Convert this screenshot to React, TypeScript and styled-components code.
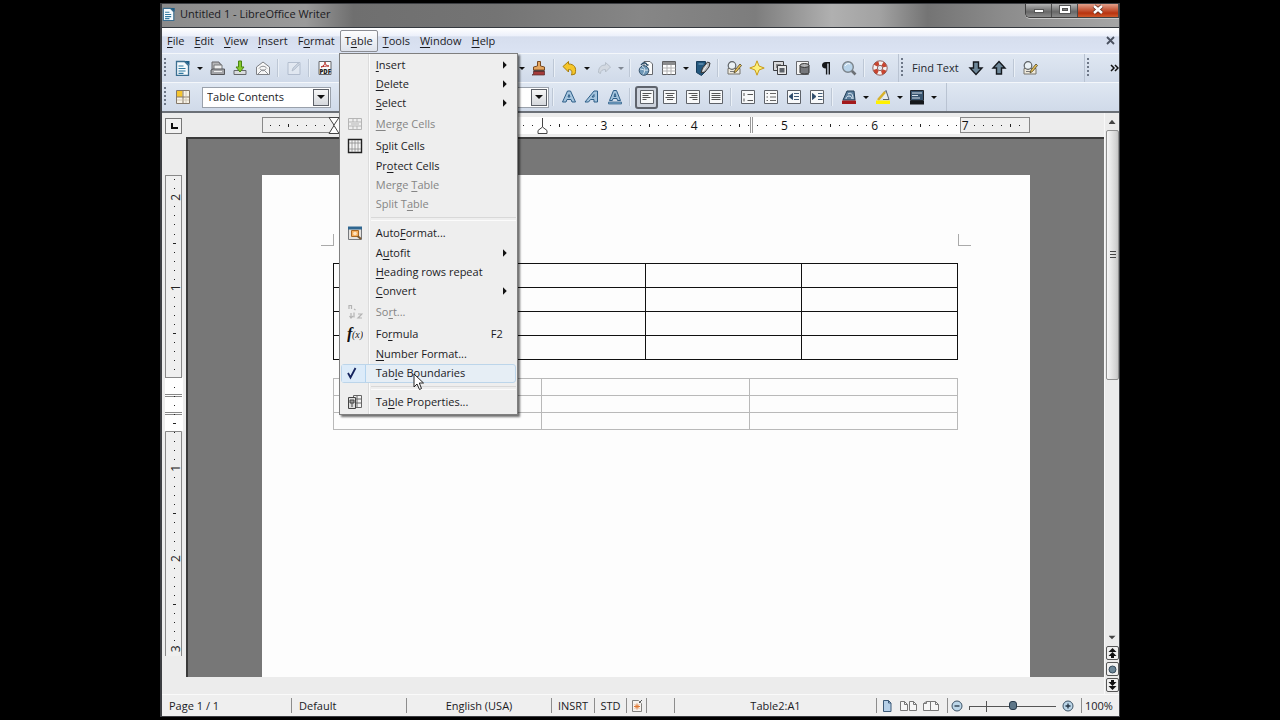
import React from "react";
import styled, { createGlobalStyle, css } from "styled-components";

const GlobalStyle = createGlobalStyle`
  * { box-sizing: border-box; }
  body {
    margin: 0;
    background: #000;
    color: #1b1b1f;
    font: 11px/16px "Open Sans", "Noto Sans", sans-serif;
  }
  button, input, select { font: inherit; color: inherit; margin: 0; }
  button { padding: 0; border: 0; background: none; }
  u { text-underline-offset: 2px; }
`;

/* ---------- window frame ---------- */

const Screen = styled.div`
  display: flex;
  height: 100vh;
  padding: 3px 160px;
  background: #000;
`;

const AppWindow = styled.div`
  flex: 1;
  min-width: 0;
  display: flex;
  flex-direction: column;
  border: solid #3c3e42;
  border-width: 1px 1px 1px 2px;
  background: #ececec;
`;

const TitleBar = styled.header`
  display: flex;
  align-items: flex-start;
  height: 24px;
  border-bottom: 1px solid #34383e;
  background: linear-gradient(90deg, #8b8b8b 0, #9a9a9a 15%, #6f6f6f 20%, #747474 35%, #868686 50%, #7d7d7d 62%, #b0b0b0 70%, #a2a2a2 75%, #747474 80%, #8c8c8c 88%, #a5a5a5 100%);
`;

const Title = styled.h1`
  flex: 1;
  display: flex;
  align-items: center;
  gap: 4px;
  margin: 0;
  font-size: 11px;
  line-height: 20px;
  font-weight: 400;
`;

const WindowButtons = styled.div`
  display: flex;
  height: 14px;
  border: solid #3f3f3f;
  border-width: 0 0 1px 1px;
  border-radius: 0 0 0 5px;
  box-shadow: 0 1px 0 #c8c8c8;
  overflow: hidden;
`;

const WindowButton = styled.button<{ $close?: boolean }>`
  width: ${(p) => (p.$close ? 41 : 26)}px;
  display: flex;
  justify-content: center;
  border-right: 1px solid #4a4a4a;
  background: ${(p) => (p.$close ? "linear-gradient(#e3a08a, #b8330f 70%, #cf5a2c)" : "linear-gradient(#b4b4b4, #686868 60%, #8b8b8b)")};
`;

/* ---------- menu bar and table menu ---------- */

const MenuBar = styled.nav`
  display: flex;
  align-items: center;
  height: 25px;
  padding-right: 4px;
  background: linear-gradient(#ffffff 0, #edf1fb 30%, #d6deee 36%, #dbe3f3 100%);
`;

const MenuSlot = styled.div`
  position: relative;
`;

const MenuTitle = styled.button<{ $open?: boolean }>`
  display: block;
  height: 22px;
  padding: 0 4px;
  line-height: 20px;
  border: 1px solid ${(p) => (p.$open ? "#8b8d93" : "transparent")};
  border-radius: 2px;
  background: ${(p) => (p.$open ? "linear-gradient(#fdfdfe, #dfe3ec)" : "none")};
`;

const CloseDocument = styled.button`
  display: flex;
  margin-left: auto;
`;

const Dropdown = styled.ul`
  position: absolute;
  z-index: 2;
  top: 23px;
  left: -1px;
  width: 179px;
  margin: 0;
  padding: 2px 1px 1px;
  list-style: none;
  border: 1px solid #7f7f7f;
  background: linear-gradient(90deg, transparent 28px, #dcdcdc 28px, #dcdcdc 29px, #fbfbfb 29px, #fbfbfb 30px, transparent 30px), #eeeeee;
  box-shadow: 2px 2px 2px #00000090;
`;

const MenuItem = styled.button<{ $tall?: boolean; $hover?: boolean }>`
  display: flex;
  align-items: center;
  width: 100%;
  height: ${(p) => (p.$tall ? 22 : 19)}px;
  border: 1px solid ${(p) => (p.$hover ? "#bcd5ea" : "transparent")};
  border-radius: 3px;
  background: ${(p) => (p.$hover ? "#e6eef5" : "none")};
  text-align: left;
  &:disabled { color: #858585; }
`;

const MenuIcon = styled.span<{ $checked?: boolean }>`
  display: flex;
  justify-content: center;
  align-self: stretch;
  align-items: center;
  width: 24px;
  margin-right: 10px;
  padding-left: ${(p) => (p.$checked ? 0 : 4)}px;
  border-right: 1px solid ${(p) => (p.$checked ? "#b3d3ee" : "transparent")};
  background: ${(p) => (p.$checked ? "#dcebf9" : "none")};
`;

const MenuText = styled.span`
  flex: 1;
  white-space: nowrap;
`;

const Shortcut = styled.span`
  padding-right: 12px;
`;

const SubmenuArrow = styled.span`
  width: 4px;
  height: 8px;
  margin-right: 8px;
  background: #111;
  clip-path: polygon(0 0, 100% 50%, 0 100%);
`;

const MenuRule = styled.li`
  height: 8px;
  margin-left: 30px;
  padding-top: 3px;
  &::before {
    content: "";
    display: block;
    height: 2px;
    border-top: 1px solid #d8d8d8;
    border-bottom: 1px solid #fbfbfb;
  }
`;

const Pointer = styled.svg`
  position: absolute;
  z-index: 3;
  top: 343px;
  left: 73px;
`;

/* ---------- toolbars ---------- */

const Toolbar = styled.div`
  display: flex;
  align-items: stretch;
  height: 29px;
  border-top: 1px solid #f4f7fb;
  background: linear-gradient(#dfe7f2, #d0dae9);
`;

const Group = styled.div<{ $grow?: boolean; $last?: boolean }>`
  display: flex;
  align-items: center;
  padding-right: ${(p) => (p.$last ? 0 : 7)}px;
  border-right: ${(p) => (p.$last ? 0 : 1)}px solid #b9c3d2;
  ${(p) => p.$grow && css`flex: 1;`}
`;

const Grip = styled.span`
  width: 2px;
  height: 20px;
  margin: 0 5px 0 2px;
  background: repeating-linear-gradient(#6d7787 0 2px, transparent 2px 4px);
`;

const Tool = styled.button<{ $active?: boolean }>`
  flex: none;
  display: flex;
  align-items: center;
  justify-content: center;
  width: 23px;
  height: 23px;
  ${(p) => p.$active && css`
    border: 2px solid #5f646d;
    border-radius: 3px;
    background: #cdd3dd;
  `}
`;

const Caret = styled.button<{ $dim?: boolean }>`
  flex: none;
  display: flex;
  align-items: center;
  justify-content: center;
  width: 11px;
  height: 20px;
  &::before {
    content: "";
    border: solid transparent;
    border-width: 3px 3px 0;
    border-top-color: ${(p) => (p.$dim ? "#808893" : "#111")};
  }
`;

const Divider = styled.span<{ $wide?: boolean }>`
  flex: none;
  width: ${(p) => (p.$wide ? 9 : 8)}px;
  height: 18px;
  background: linear-gradient(90deg, transparent 3px, #bdc7d5 3px 4px, #eaf0f7 4px 5px, transparent 5px);
`;

const Combo = styled.span<{ $width: number }>`
  flex: none;
  display: flex;
  width: ${(p) => p.$width}px;
  height: 21px;
  margin: 0 0 0 8px;
  padding: 1px;
  border: 1px solid #9aa1ab;
  background: #fff;
`;

const ComboSelect = styled.select`
  flex: 1;
  min-width: 0;
  padding: 0 3px;
  border: 0;
  background: #fff;
  appearance: none;
`;

const ComboArrow = styled.span`
  display: flex;
  align-items: center;
  justify-content: center;
  width: 16px;
  border: 1px solid #5c6068;
  background: linear-gradient(#f7f7f7, #d5d8dd);
  pointer-events: none;
  &::before {
    content: "";
    border: solid transparent;
    border-width: 4px 4px 0;
    border-top-color: #111;
  }
`;

const FindInput = styled.input`
  width: 56px;
  padding: 0 0 0 4px;
  border: 0;
  outline: 0;
  background: none;
  &::placeholder { color: #25282e; opacity: 1; }
`;

const Overflow = styled.button`
  display: flex;
`;

/* ---------- document area ---------- */

const Body = styled.div`
  flex: 1;
  min-height: 0;
  display: flex;
  border-top: 2px solid #6b7077;
`;

const Editor = styled.main`
  flex: 1;
  min-width: 0;
  display: flex;
  flex-direction: column;
  padding-bottom: 17px;
`;

const RulerRow = styled.div`
  display: flex;
  align-items: center;
  height: 24px;
  padding-top: 2px;
`;

const TabCorner = styled.button`
  display: flex;
  width: 17px;
  height: 16px;
  margin: 0 5px 0 3px;
  align-items: center;
  justify-content: center;
  border: 1px solid #777;
  background: #f2f2f2;
`;

const RulerTrack = styled.div`
  flex: 1;
  display: flex;
  justify-content: center;
`;

const Canvas = styled.div`
  flex: 1;
  min-height: 0;
  display: flex;
`;

const SideRuler = styled.div`
  width: 24px;
  padding: 38px 0 0 3px;
`;

const Workspace = styled.div`
  flex: 1;
  min-width: 0;
  display: flex;
  justify-content: center;
  overflow: hidden;
  padding-top: 36px;
  border: solid #3a3a3a;
  border-width: 2px 0 0 2px;
  background: #777777;
`;

const Paper = styled.article`
  width: 768px;
  padding: 59px 59px 0;
  background: #fdfdfd;
`;

const Corners = styled.div`
  display: flex;
  justify-content: space-between;
  height: 12px;
  margin-bottom: 17px;
`;

const Corner = styled.span<{ $right?: boolean }>`
  width: 13px;
  border: solid #aaaaaa;
  border-width: ${(p) => (p.$right ? "0 0 1px 1px" : "0 1px 1px 0")};
`;

const Grid = styled.table<{ $faint?: boolean }>`
  width: 625px;
  margin: 0 12px 18px;
  border-collapse: collapse;
  table-layout: fixed;
  td {
    height: ${(p) => (p.$faint ? 17 : 24)}px;
    padding: 0;
    border: 1px solid ${(p) => (p.$faint ? "#b9b9b9" : "#111")};
  }
`;

const ScrollColumn = styled.div`
  display: flex;
  flex-direction: column;
  align-items: center;
  width: 15px;
  border-left: 1px solid #f8f8f8;
  background: #ebebeb;
`;

const ScrollTrack = styled.div`
  flex: 1;
  align-self: stretch;
`;

const Thumb = styled.div`
  display: flex;
  align-items: center;
  justify-content: center;
  height: 50%;
  margin-left: 1px;
  border: 1px solid #8f8f8f;
  border-radius: 2px;
  background: linear-gradient(90deg, #f7f7f7, #d3d3d3 80%, #c4c4c4);
`;

const ThumbGrip = styled.span`
  width: 6px;
  height: 8px;
  background: repeating-linear-gradient(#444 0 1px, transparent 1px 3px);
`;

const ScrollArrow = styled.button<{ $up?: boolean }>`
  width: 7px;
  height: 17px;
  background: #444;
  clip-path: ${(p) => (p.$up ? "polygon(50% 40%, 100% 64%, 0 64%)" : "polygon(0 40%, 100% 40%, 50% 60%)")};
`;

const PageButton = styled.button`
  display: flex;
  align-items: center;
  justify-content: center;
  width: 13px;
  height: 14px;
  margin-bottom: 2px;
  border: 1px solid #555;
  border-radius: 2px;
  background: #f0f0f0;
`;

/* ---------- status bar ---------- */

const StatusBar = styled.footer`
  display: flex;
  align-items: center;
  height: 22px;
  border-top: 1px solid #fafafa;
  background: #efefef;
`;

const StatusCell = styled.div<{ $width?: number; $center?: boolean; $last?: boolean; $pad?: number }>`
  ${(p) => (p.$width ? `width: ${p.$width}px;` : "flex: 1;")}
  height: 15px;
  display: flex;
  align-items: center;
  justify-content: ${(p) => (p.$center ? "center" : "flex-start")};
  gap: 4px;
  padding-left: ${(p) => p.$pad ?? 0}px;
  border-right: ${(p) => (p.$last ? 0 : 1)}px solid #8d8d8d;
  white-space: nowrap;
`;

const ZoomSlider = styled.input`
  width: 87px;
  height: 14px;
  appearance: none;
  background:
    linear-gradient(#555, #555) 0 7px / 100% 1px no-repeat,
    linear-gradient(#555, #555) 0 7px / 1px 4px no-repeat,
    linear-gradient(#555, #555) 17px 2px / 1px 11px no-repeat;
  &::-webkit-slider-thumb {
    appearance: none;
    width: 8px;
    height: 9px;
    border: 1px solid #26394a;
    border-radius: 3px;
    background: #5d7688;
  }
`;

/* ---------- icons ---------- */

const art: Record<string, React.ReactNode> = {
  doc: (
    <>
      <path d="M1.5 1.5h8l4 4v10h-12z" fill="#f5fafd" stroke="#3c6f91" strokeWidth="1.3" />
      <path d="M9.5 1l5 4.5V1z" fill="#1f5f87" />
      <path d="M3.5 6h5M3.5 8.5h7M3.5 11h7M3.5 13.3h5" stroke="#2f789f" strokeWidth="1.2" />
    </>
  ),
  open: (
    <>
      <path d="M3 11V2h7l1 2h1v5" fill="#b6b6b8" stroke="#66676b" />
      <path d="M5 9V5h8v4" fill="#eee" stroke="#77787b" />
      <path d="M2 14.5V10l2-1h11.500v5.500z" fill="#a3a4a8" stroke="#55565a" />
      <path d="M5 11.500h8" stroke="#eee" />
    </>
  ),
  save: (
    <>
      <path d="M2 10.5h12v4H2z" fill="#d9dbde" stroke="#66686c" />
      <path d="M6.500 1h3v6H12l-4 5-4-5h2.500z" fill="#86c92d" stroke="#4a8413" />
    </>
  ),
  mail: (
    <>
      <path d="M1.500 7l6.500-5 6.500 5v7.500h-13z" fill="#f7f7f7" stroke="#7e8085" />
      <path d="M4 8.500c2-3 6-3 8 0M3 14l4-4h2l4 4M5 9l3 2 3-2" fill="none" stroke="#8d8f94" />
    </>
  ),
  edit: (
    <g opacity=".45">
      <path d="M2 2.500h12v12H2z" fill="#eef1f6" stroke="#8795aa" />
      <path d="M6 11l1-3 5-5 1.500 1.500-5 5z" fill="#b5bfcd" stroke="#7b8798" strokeWidth=".7" />
    </g>
  ),
  pdf: (
    <>
      <path d="M2 1.500h12v13H2z" fill="#fafafa" stroke="#65666b" />
      <path d="M4 7c3-1 4-3 4-5 0 3 2 4 4 4-3 0-6 .5-8 1z" fill="none" stroke="#b8332c" />
      <text x="2.500" y="14" fontSize="6" fontWeight="800" fill="#222">PDF</text>
    </>
  ),
  brush: (
    <>
      <path d="M6.500 1.500h3V6l4 1v3h-11V7l4-1z" fill="#e5a660" stroke="#7a4b23" />
      <path d="M2.500 10h11v2h-11z" fill="#54453f" />
      <path d="M2.500 11.500h11v3.500H1l1.500-1z" fill="#a53b3a" stroke="#572829" strokeWidth=".7" />
    </>
  ),
  undo: <path d="M1 6.500l5.500-5V4c5.500 0 8.500 3.500 6.500 10l-3.500 1c1-4 0-5.500-3-5.500v2.500z" fill="#f5c62b" stroke="#a77d0c" />,
  redo: <path d="M14.500 7l-5-4.500V5c-4 0-7 2-7 7.500l2 1c0-3 2-4 5-4V12z" fill="#d3d9e1" stroke="#b6bfca" />,
  link: (
    <>
      <path d="M6 1.500h6l2.500 2.500v10.500H6z" fill="#fafafa" stroke="#66686d" />
      <circle cx="6" cy="10.500" r="4.800" fill="#6f98b7" stroke="#34516a" />
      <path d="M2 9c3 0 4 2 8 1M4 6.500c4 1 3 5 1 8" fill="none" stroke="#d5e4ee" />
      <path d="M3 5c2-3 5-3 6 0l1.500 0" fill="none" stroke="#24455f" strokeWidth="1.300" />
    </>
  ),
  table: (
    <>
      <path d="M1.500 1.500h13v13h-13z" fill="#fff" stroke="#5f6063" />
      <path d="M2 2h12v3H2z" fill="#8a8b8d" />
      <path d="M1.500 8h13M1.500 11h13M6 5v9.500M10 5v9.500" stroke="#b3b3b4" />
    </>
  ),
  draw: (
    <>
      <path d="M1.500 1.500h9v10l-4 4-5-3z" fill="#24587f" stroke="#173d5b" />
      <path d="M6 13l1.500-5 5-6 2.500 1-1 4-4 5z" fill="#b9bcc0" stroke="#333" />
      <path d="M3.500 4h5" stroke="#84aecb" />
      <path d="M8 11l4-6" stroke="#f4f4f4" />
    </>
  ),
  find: (
    <>
      <path d="M2 8.500h12V14H2z" fill="#eee9dc" stroke="#77746c" />
      <circle cx="6" cy="5.500" r="3.800" fill="#eaf1f5" stroke="#5e6266" strokeWidth="1.200" />
      <path d="M8 13l1-3 5-6 1.500 1.500-5 6z" fill="#e8c156" stroke="#4e4528" strokeWidth=".8" />
      <path d="M4 11.500h4" stroke="#777" />
    </>
  ),
  star: <path d="M8 .8l2 5.200 5.200 2L10 10l-2 5.200L6 10 .8 8 6 6z" fill="#fdf07a" stroke="#c99b19" strokeLinejoin="round" />,
  gallery: (
    <>
      <path d="M1.500 1.500h10v9h-10z" fill="#d9dadc" stroke="#3d3e42" />
      <path d="M4 4h5v4H4z" fill="#888" />
      <path d="M5.500 5.500h9v9h-9z" fill="#e8e9ea" stroke="#3d3e42" />
      <path d="M7.500 8h5v4.500h-5z" fill="#5c6167" />
    </>
  ),
  sources: (
    <>
      <path d="M1.500 1.500h12v13h-12z" fill="#f5f5f5" stroke="#67696d" />
      <path d="M5 5.500v7c1 2 8 2 9 0v-7z" fill="#75777b" stroke="#333" />
      <ellipse cx="9.500" cy="5.500" rx="4.500" ry="2" fill="#b1b3b6" stroke="#333" />
    </>
  ),
  para: <path d="M12 2v12.500h-1.400V3.500H9.300v11H7.900V8.500C5 8.500 4 7 4 5.200S5.300 2 7.900 2z" fill="#15171a" />,
  zoom: (
    <>
      <path d="M10.500 10.500l4 4" stroke="#6c7075" strokeWidth="2.600" />
      <circle cx="7" cy="7" r="5.300" fill="#b9d4ea" stroke="#7b838a" strokeWidth="1.400" />
      <path d="M4 6c1-2 3-3 5-2" stroke="#fff" fill="none" />
    </>
  ),
  help: (
    <>
      <circle cx="8" cy="8" r="5" fill="none" stroke="#f3f3f3" strokeWidth="4" />
      <circle cx="8" cy="8" r="5" fill="none" stroke="#c8442f" strokeWidth="4" strokeDasharray="4 3.850" strokeDashoffset="-2" />
      <circle cx="8" cy="8" r="7.200" fill="none" stroke="#854036" strokeWidth=".8" />
      <circle cx="8" cy="8" r="2.700" fill="#dfe6ef" stroke="#854036" strokeWidth=".8" />
    </>
  ),
  down: <path d="M5.500 2h5v6H14l-6 6.500L2 8h3.500z" fill="#6d8799" stroke="#15191e" strokeWidth="1.400" />,
  up: <path d="M5.500 14h5V8H14L8 1.500 2 8h3.500z" fill="#6d8799" stroke="#15191e" strokeWidth="1.400" />,
  styles: (
    <>
      <path d="M1.500 1.500h13v13h-13z" fill="#f7f2e6" stroke="#85796a" />
      <path d="M2 2h5.500v6H2z" fill="#f6c52e" />
      <path d="M8 1.500v13M1.500 8h13" stroke="#85796a" />
      <path d="M11 2v12M2 11h12" stroke="#c9c0b0" strokeWidth=".8" />
    </>
  ),
  bold: <path d="M1.500 13L6.500 2h3l5 11H11l-1-2.500H6L5 13zM7 8h2L8 5.500z" fill="#a6c5de" stroke="#2e5f88" />,
  italic: <path d="M1 13l9-11h3.500v11H10v-2.500H6.500l-2 2.500zM8 8h2V5.500z" fill="#a6c5de" stroke="#2e5f88" />,
  underline: (
    <>
      <path d="M2.500 11.500L6.500 1.500h3l4 10h-3L10 9.500H6l-.7 2zM7 7.500h2L8 4.500z" fill="#a6c5de" stroke="#2e5f88" />
      <path d="M1.500 13h13v2h-13z" fill="#7ca6c8" stroke="#2e5f88" strokeWidth=".7" />
    </>
  ),
  fontColor: (
    <>
      <path d="M2 11L6 2h7l1 9z" fill="#5c7f9e" stroke="#223e57" />
      <path d="M5 10c0-4 6-4 6 0M7 5c3-2 5 0 5 5" fill="none" stroke="#dce8f2" />
      <path d="M1 11.500h14V15H1z" fill="#a3191b" />
    </>
  ),
  highlight: (
    <>
      <path d="M9 3.500l2-2 3 9H8" fill="#e8edf1" stroke="#54606b" />
      <path d="M3 11l7-8" stroke="#d8b22a" strokeWidth="2.500" />
      <path d="M1 11.500h14V15H1z" fill="#fff101" />
    </>
  ),
  background: (
    <>
      <path d="M1.500 1.500h13v10h-13z" fill="#36536e" stroke="#20252c" />
      <path d="M3 4h10M3 6.500h6M3 9h8" stroke="#d4dfe9" strokeWidth="1.200" />
      <path d="M1 12h14v3.500H1z" fill="#15171b" />
    </>
  ),
  numbered: boxed(<path d="M4 4v3M7.500 5.500H13M4 9.500v3M7.500 11.500H13" stroke="#555" />),
  bullets: boxed(<path d="M3.500 4.500h1.500M7 4.500h6M3.500 8h1.500M7 8h6M3.500 11.500h1.500M7 11.500h6" stroke="#666" />),
  outdent: boxed(<path d="M6.500 4.500v6L3 7.500zM8 4.500h5M8 7.500h5M8 10.500h5" fill="#2b4a6a" stroke="#2b4a6a" strokeWidth=".9" />),
  indent: boxed(<path d="M3.500 4.500v6L7 7.500zM9 4.500h4.500M9 7.500h4.500M9 10.500h4.500" fill="#2b4a6a" stroke="#2b4a6a" strokeWidth=".9" />),
  left: boxed(<path d="M3.500 4.500h9M3.500 6.500h6M3.500 8.500h8M3.500 10.500h4" stroke="#555" />),
  center: boxed(<path d="M3.500 4.500h9M5 6.500h6M3.500 8.500h9M5 10.500h6" stroke="#555" />),
  right: boxed(<path d="M3.500 4.500h9M6.500 6.500h6M4.500 8.500h8M7.500 10.500h5" stroke="#555" />),
  justify: boxed(<path d="M3.500 4.500h9M3.500 6.500h9M3.500 8.500h9M3.500 10.500h9" stroke="#555" />),
  blank: null,
  mergeCells: (
    <path d="M1.500 2.500h13v11h-13zM1.500 6h13M1.500 10h13M6 2.500V6M10 2.500V6M6 10v3.500M10 10v3.500M4 8h8" fill="none" stroke="#b5b5b5" />
  ),
  splitCells: (
    <>
      <path d="M1.500 1.500h13v13h-13z" fill="#f4f4f4" stroke="#222" strokeWidth="1.400" />
      <path d="M5 2v12M8 2v12M11 2v12M2 5h12M2 11h12" stroke="#8b8b8b" strokeWidth=".8" />
    </>
  ),
  autoFormat: (
    <>
      <path d="M1.500 2.500h13v12h-13z" fill="#e4e2e0" stroke="#77797c" />
      <path d="M1 1.500h14v3H1z" fill="#2f6690" />
      <path d="M4.500 5.500h7v6h-7z" fill="#f6ad5c" stroke="#a86824" />
      <circle cx="8" cy="8.500" r="1.800" fill="#fde3c0" />
      <path d="M10.500 11l3.500 3" stroke="#7d5a30" strokeWidth="2" />
    </>
  ),
  sort: (
    <path d="M2 5V1.500h2.500V5M7 5l1.500 1M4 9v4M2.500 12L4 14l2-2M7 8.500v5M11 10h4l-4 4h4" fill="none" stroke="#b4b4b4" strokeWidth="1.200" />
  ),
  formula: (
    <>
      <text x="0" y="13" fontFamily="Liberation Serif, serif" fontSize="16" fontWeight="700" fontStyle="italic" fill="#111">f</text>
      <text x="5" y="12" fontFamily="Liberation Serif, serif" fontSize="10" fontStyle="italic" fill="#222">(x)</text>
    </>
  ),
  check: <path d="M3 8l2.500 4.500L10.500 3" fill="none" stroke="#15245e" strokeWidth="1.800" />,
  tableProps: (
    <>
      <path d="M6.500 1.500h8v12h-8zM10 2v11M6.500 5h8M6.500 9h8" fill="#f3f3f3" stroke="#666" />
      <path d="M1.500 3.500h7v11h-7z" fill="#ddd" stroke="#444" />
      <path d="M3 6h4v3H3zM5 9v4" fill="#999" stroke="#444" />
    </>
  ),
  page: (
    <>
      <path d="M4.500 2.500h5l2.500 2.500v8.500H4.500z" fill="#b6d0e8" stroke="#3c5a78" />
      <path d="M9.500 2.500V5H12" fill="none" stroke="#3c5a78" />
    </>
  ),
  minus: zoomRound(<path d="M5.500 8h5" stroke="#234" strokeWidth="1.300" />),
  plus: zoomRound(<path d="M5.500 8h5M8 5.500v5" stroke="#234" strokeWidth="1.300" />),
  modified: (
    <>
      <path d="M3.500 2.500h6l3 3v8h-9z" fill="#f6f3ef" stroke="#83827f" />
      <path d="M8 5.500v6M5 8.500h6M6 6.500l4 4M10 6.500l-4 4" stroke="#e07a35" />
      <path d="M10 5l3-3" stroke="#555" />
    </>
  ),
};

function boxed(inner: React.ReactNode) {
  return (
    <>
      <path d="M1.500 1.500h13v13h-13z" fill="#f8f9fa" stroke="#5e6269" />
      {inner}
    </>
  );
}

function zoomRound(inner: React.ReactNode) {
  return (
    <>
      <circle cx="8" cy="8" r="5" fill="#bcd6e8" stroke="#3d5366" />
      {inner}
    </>
  );
}

const Icon = ({ name, size = 16 }: { name: string; size?: number }) => (
  <svg width={size} height={size} viewBox="0 0 16 16" aria-hidden="true">
    {art[name]}
  </svg>
);

/* ---------- rulers ---------- */

const INCH = 90.3;

/* Dots at every tenth of an inch, a short tick at each half, a number at each inch. */
function scaleMarks(origin: number, from: number, to: number, vertical: boolean) {
  const marks: React.ReactNode[] = [];
  for (let i = Math.ceil(((from - origin) / INCH) * 10); ; i++) {
    const at = origin + (i * INCH) / 10;
    if (at > to - 3) break;
    if (at < from + 3 || i === 0) continue;
    if (i % 10 === 0) {
      marks.push(
        vertical ? (
          <text key={i} transform={`translate(15 ${at}) rotate(-90)`} textAnchor="middle" fontSize="12" fill="#222">{Math.abs(i / 10)}</text>
        ) : (
          <text key={i} x={at} y="13" textAnchor="middle" fontSize="12" fontWeight="500" fill="#111">{Math.abs(i / 10)}</text>
        )
      );
    } else {
      const long = i % 5 === 0 ? 3 : 1;
      const p = Math.round(at);
      marks.push(
        vertical ? (
          <rect key={i} x={9 - (long >> 1)} y={p} width={long} height="1" fill="#222" />
        ) : (
          <rect key={i} x={p} y={8 - (long >> 1)} width="1" height={long} fill="#222" />
        )
      );
    }
  }
  return marks;
}

const HorizontalRuler = () => (
  <svg width="768" height="18" role="img" aria-label="Horizontal ruler">
    <rect x="71" y="0" width="627" height="17" fill="#fefefe" />
    <rect x=".5" y=".5" width="71" height="15" fill="#efefef" stroke="#888" />
    <rect x="698.500" y=".5" width="69" height="15" fill="#efefef" stroke="#888" />
    {scaleMarks(71, 0, 768, false)}
    <path d="M67 .5h10l-5 7.500zM67 16.500h10l-5-8z" fill="#fff" stroke="#444" />
    <rect x="274" y="1" width="13" height="16" fill="#fefefe" />
    <path d="M280.500 1v9l-4.500 3.500v3h9v-3L280.500 10" fill="#fff" stroke="#444" />
    <path d="M488.500 0v16M490.500 0v16" stroke="#999" />
  </svg>
);

const VerticalRuler = () => (
  <svg width="18" height="481" role="img" aria-label="Vertical ruler">
    <rect x="0" y="202" width="18" height="54" fill="#fefefe" />
    <rect x=".5" y=".5" width="16" height="202" fill="#efefef" stroke="#888" />
    <path d="M.5 481V256.500h16V481" fill="#efefef" stroke="#888" />
    <path d="M0 219.500h17M0 221.500h17M0 237.500h17M0 239.500h17" stroke="#888" />
    {scaleMarks(203, 0, 481, true)}
  </svg>
);

/* ---------- content ---------- */

/* Underlines the character that follows "_". */
const Mnemonic = ({ text }: { text: string }) => {
  const i = text.indexOf("_");
  if (i < 0) return <>{text}</>;
  return (
    <>
      {text.slice(0, i)}
      <u>{text[i + 1]}</u>
      {text.slice(i + 2)}
    </>
  );
};

type Entry = { text: string; icon?: string; sub?: boolean; off?: boolean; key?: string; on?: boolean } | null;

const tableMenu: Entry[] = [
  { text: "_Insert", sub: true },
  { text: "_Delete", sub: true },
  { text: "_Select", sub: true },
  { text: "_Merge Cells", icon: "mergeCells", off: true },
  { text: "S_plit Cells", icon: "splitCells" },
  { text: "Pr_otect Cells" },
  { text: "Merge _Table", off: true },
  { text: "Split T_able", off: true },
  null,
  { text: "Auto_Format...", icon: "autoFormat" },
  { text: "A_utofit", sub: true },
  { text: "_Heading rows repeat" },
  { text: "_Convert", sub: true },
  { text: "So_rt...", icon: "sort", off: true },
  { text: "Fo_rmula", icon: "formula", key: "F2" },
  { text: "_Number Format..." },
  { text: "Tab_le Boundaries", on: true },
  null,
  { text: "Ta_ble Properties...", icon: "tableProps" },
];

const TableMenu = () => (
  <Dropdown aria-label="Table">
    {tableMenu.map((e, i) =>
      e ? (
        <li key={i}>
          <MenuItem $tall={!!e.icon} $hover={e.on} disabled={e.off}>
            <MenuIcon $checked={e.on}>{(e.icon || e.on) && <Icon name={e.icon || "check"} />}</MenuIcon>
            <MenuText><Mnemonic text={e.text} /></MenuText>
            {e.key && <Shortcut>{e.key}</Shortcut>}
            {e.sub && <SubmenuArrow />}
          </MenuItem>
        </li>
      ) : (
        <MenuRule key={i} />
      )
    )}
  </Dropdown>
);

/* "|" is a divider, "v" a drop-down arrow, "-v" a dimmed one. */
const Tools = ({ items, active, wide }: { items: string[]; active?: string; wide?: boolean }) => (
  <>
    {items.map((t, i) => {
      if (t === "|") return <Divider key={i} $wide={wide} />;
      if (t === "v" || t === "-v") return <Caret key={i} $dim={t === "-v"} aria-label="More options" />;
      return (
        <Tool key={i} aria-label={t} $active={t === active}>
          <Icon name={t} />
        </Tool>
      );
    })}
  </>
);

const ComboBox = ({ label, value, width }: { label: string; value: string; width: number }) => (
  <Combo $width={width}>
    <ComboSelect aria-label={label} defaultValue={value}>
      <option>{value}</option>
    </ComboSelect>
    <ComboArrow />
  </Combo>
);

const DocTable = ({ rows, cols, faint }: { rows: number; cols: number; faint?: boolean }) => (
  <Grid $faint={faint}>
    <tbody>
      {Array.from({ length: rows }, (_, r) => (
        <tr key={r}>
          {Array.from({ length: cols }, (_, c) => <td key={c} />)}
        </tr>
      ))}
    </tbody>
  </Grid>
);

const PageViews = () => (
  <svg width="46" height="16" viewBox="0 0 46 16" aria-hidden="true" fill="#f6f6f6" stroke="#777">
    <path d="M1.500 3.500h4l3 3v6h-7zM10.500 3.500h4l3 3v6h-7zM24.500 5.500l3-2h4v9h-7zM31.500 3.500h5l3 3v6h-8z" />
    <path d="M5.500 3.500v3h3M14.500 3.500v3h3M36.500 3.500v3h3M24.500 5.500h3v-2" fill="none" />
  </svg>
);

export default function App() {
  return (
    <Screen>
      <GlobalStyle />
      <AppWindow>
        <TitleBar>
          <Title>
            <Icon name="doc" size={14} />
            Untitled 1 - LibreOffice Writer
          </Title>
          <WindowButtons>
            <WindowButton aria-label="Minimize">
              <svg width="12" height="12"><rect x="1.500" y="5.500" width="9" height="3" fill="#fff" stroke="#555" /></svg>
            </WindowButton>
            <WindowButton aria-label="Maximize">
              <svg width="12" height="12"><path d="M2 3h8v5H2z" fill="none" stroke="#555" strokeWidth="4" /><path d="M2 3h8v5H2z" fill="none" stroke="#fff" strokeWidth="2" /></svg>
            </WindowButton>
            <WindowButton aria-label="Close" $close>
              <svg width="12" height="12"><path d="M2 2l8 7M10 2L2 9" stroke="#5c2a1c" strokeWidth="4" /><path d="M2 2l8 7M10 2L2 9" stroke="#fff" strokeWidth="2.500" /></svg>
            </WindowButton>
          </WindowButtons>
        </TitleBar>

        <MenuBar>
          {["_File", "_Edit", "_View", "_Insert", "F_ormat", "T_able", "_Tools", "_Window", "_Help"].map((m) => (
            <MenuSlot key={m}>
              <MenuTitle $open={m === "T_able"}><Mnemonic text={m} /></MenuTitle>
              {m === "T_able" && (
                <>
                  <TableMenu />
                  <Pointer width="12" height="18" viewBox="0 0 12 18" aria-hidden="true">
                    <path d="M1 1v13l3-3 2.500 5.500 2-1L6.300 10H10.500z" fill="#fff" stroke="#222" />
                  </Pointer>
                </>
              )}
            </MenuSlot>
          ))}
          <CloseDocument aria-label="Close document">
            <svg width="9" height="9"><path d="M1 1l7 7M8 1L1 8" stroke="#4a5160" strokeWidth="1.800" /></svg>
          </CloseDocument>
        </MenuBar>

        <Toolbar>
          <Group>
            <Grip />
            <Tools items={["doc", "v", "open", "save", "mail", "|", "edit", "|", "pdf", "blank", "blank", "|", "blank", "blank", "blank", "blank", "blank", "v", "v", "brush", "|", "undo", "v", "redo", "-v", "|", "link", "table", "v", "draw", "|", "find", "star", "gallery", "sources", "para", "zoom", "|", "help"]} />
          </Group>
          <Group $grow>
            <Grip />
            <FindInput placeholder="Find Text" aria-label="Find Text" />
            <Tools items={["down", "up", "|", "find"]} />
          </Group>
          <Group $last>
            <Grip />
            <Overflow aria-label="More buttons">
              <svg width="25" height="10" aria-hidden="true"><path d="M17 2l3 3-3 3M21 2l3 3-3 3" fill="none" stroke="#111" strokeWidth="1.500" /></svg>
            </Overflow>
          </Group>
        </Toolbar>

        <Toolbar>
          <Group>
            <Grip />
            <Tools items={["styles"]} />
            <ComboBox label="Paragraph style" value="Table Contents" width={129} />
            <ComboBox label="Font name" value="" width={150} />
            <ComboBox label="Font size" value="" width={52} />
            <Divider />
            <Tools
              wide
              active="left"
              items={["bold", "italic", "underline", "|", "left", "center", "right", "justify", "|", "numbered", "bullets", "outdent", "indent", "|", "fontColor", "v", "highlight", "v", "background", "v"]}
            />
          </Group>
        </Toolbar>

        <Body>
          <Editor>
            <RulerRow>
              <TabCorner aria-label="Tab type">
                <svg width="8" height="8"><path d="M2 1v5h6" fill="none" stroke="#111" strokeWidth="2" /></svg>
              </TabCorner>
              <RulerTrack><HorizontalRuler /></RulerTrack>
            </RulerRow>
            <Canvas>
              <SideRuler><VerticalRuler /></SideRuler>
              <Workspace>
                <Paper>
                  <Corners>
                    <Corner />
                    <Corner $right />
                  </Corners>
                  <DocTable rows={4} cols={4} />
                  <DocTable rows={3} cols={3} faint />
                </Paper>
              </Workspace>
            </Canvas>
          </Editor>
          <ScrollColumn>
            <ScrollArrow $up aria-label="Scroll up" />
            <ScrollTrack><Thumb><ThumbGrip /></Thumb></ScrollTrack>
            <ScrollArrow aria-label="Scroll down" />
            <PageButton aria-label="Previous page">
              <svg width="9" height="10"><path d="M4.500 0l4 4h-8zM4.500 4l4 4h-8zM3 8h3v2H3z" fill="#111" /></svg>
            </PageButton>
            <PageButton aria-label="Navigation">
              <svg width="9" height="9"><circle cx="4.500" cy="4.500" r="3.500" fill="#6d8798" stroke="#34495a" /></svg>
            </PageButton>
            <PageButton aria-label="Next page">
              <svg width="9" height="10"><path d="M4.500 10l4-4h-8zM4.500 6l4-4h-8zM3 0h3v2H3z" fill="#111" /></svg>
            </PageButton>
          </ScrollColumn>
        </Body>

        <StatusBar>
          <StatusCell $width={130} $pad={7}>Page 1 / 1</StatusCell>
          <StatusCell $width={115} $pad={7}>Default</StatusCell>
          <StatusCell $width={145} $center>English (USA)</StatusCell>
          <StatusCell $width={43} $center>INSRT</StatusCell>
          <StatusCell $width={32} $center>STD</StatusCell>
          <StatusCell $width={20} $center><Icon name="modified" /></StatusCell>
          <StatusCell $width={28} />
          <StatusCell $center>Table2:A1</StatusCell>
          <StatusCell $width={71} $center><Icon name="page" /><PageViews /></StatusCell>
          <StatusCell $width={134} $pad={1}>
            <Icon name="minus" />
            <ZoomSlider type="range" min={0} max={100} defaultValue={50} aria-label="Zoom" />
            <Icon name="plus" />
          </StatusCell>
          <StatusCell $width={37} $pad={3} $last>100%</StatusCell>
        </StatusBar>
      </AppWindow>
    </Screen>
  );
}
